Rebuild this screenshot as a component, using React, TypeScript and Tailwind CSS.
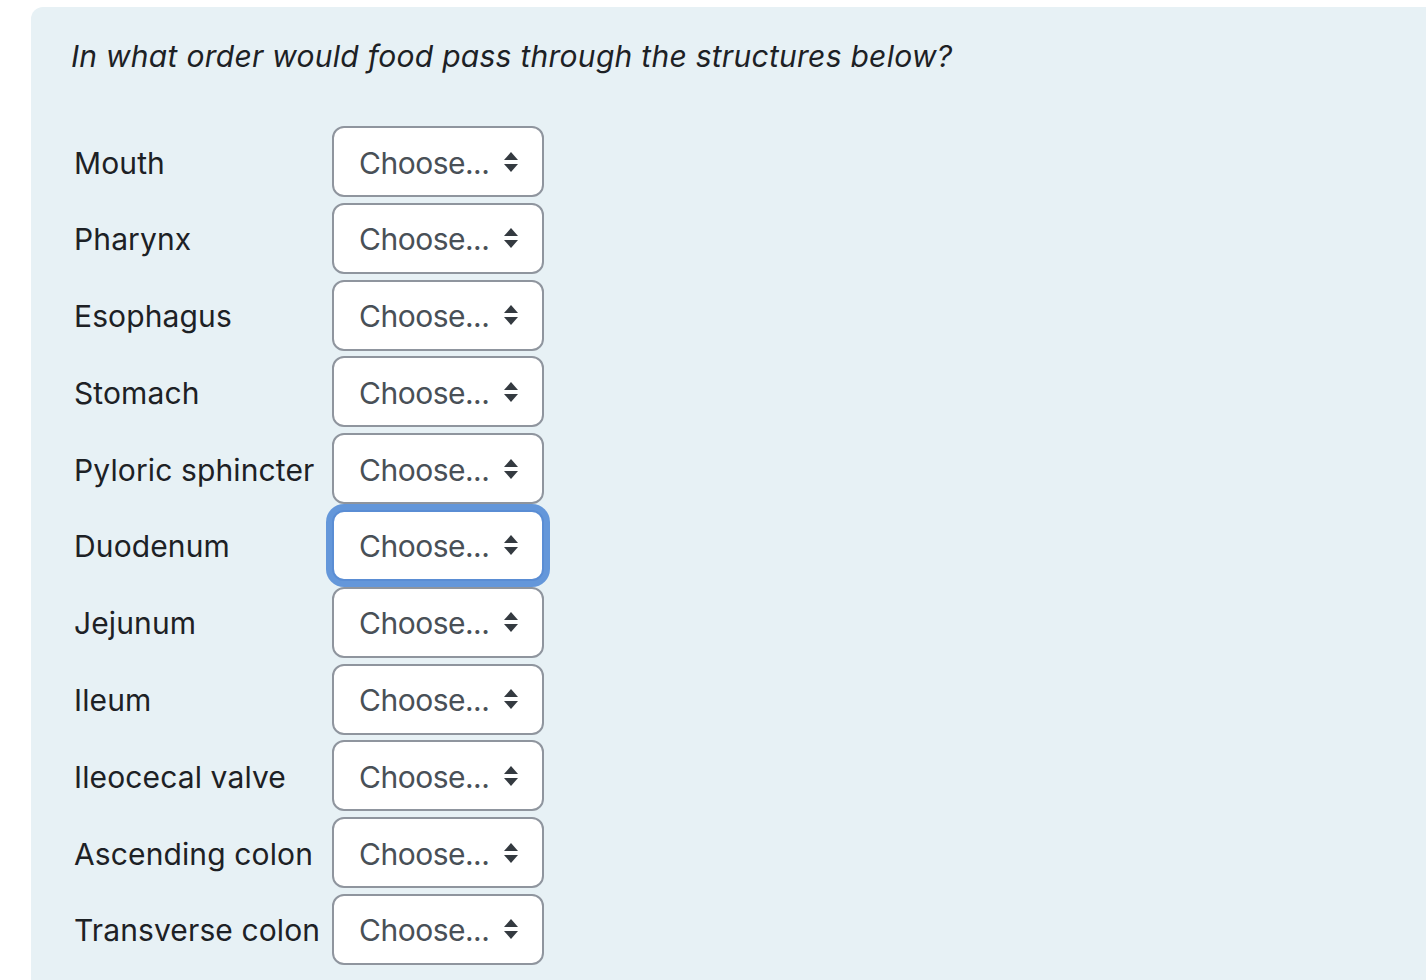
import React from "react";

const items = [
  "Mouth",
  "Pharynx",
  "Esophagus",
  "Stomach",
  "Pyloric sphincter",
  "Duodenum",
  "Jejunum",
  "Ileum",
  "Ileocecal valve",
  "Ascending colon",
  "Transverse colon",
];

function Arrows() {
  return (
    <svg width="16" height="22" viewBox="0 0 16 22" className="shrink-0">
      <path d="M8 1 L15 9 L1 9 Z" fill="#343a40" />
      <path d="M1 13 L15 13 L8 21 Z" fill="#343a40" />
    </svg>
  );
}

export default function App() {
  return (
    <div
      className="w-[1426px] h-[980px] overflow-hidden bg-white"
      style={{ fontFamily: "Inter, 'Liberation Sans', sans-serif" }}
    >
      <div className="ml-[31px] mt-[7px] h-[1000px] rounded-tl-[12px] bg-[#e7f1f5] pl-[40px] pt-[29px]">
        <p className="text-[30px] italic tracking-[0.27px] text-[#1d2125] leading-[40px]">
          In what order would food pass through the structures below?
        </p>
        <div className="mt-[50px] flex flex-col gap-[5.8px]">
          {items.map((it, i) => {
            const focused = i === 5;
            return (
              <div key={it} className="flex items-center">
                <div className="w-[261px] pl-[3px] pt-[3px] text-[30px] tracking-[0.12px] text-[#1d2125]">{it}</div>
                <div
                  className={
                    focused
                      ? "flex h-[71px] w-[212px] items-center justify-between rounded-[12px] border-2 border-[#5a8dd4] bg-white pl-[25px] pr-[23px] shadow-[0_0_0_6px_#6497da]"
                      : "flex h-[71px] w-[212px] items-center justify-between rounded-[12px] border-2 border-[#8f959e] bg-white pl-[25px] pr-[23px]"
                  }
                >
                  <span className="pt-[3px] text-[30px] tracking-[-0.5px] text-[#495057]">Choose...</span>
                  <Arrows />
                </div>
              </div>
            );
          })}
        </div>
      </div>
    </div>
  );
}
